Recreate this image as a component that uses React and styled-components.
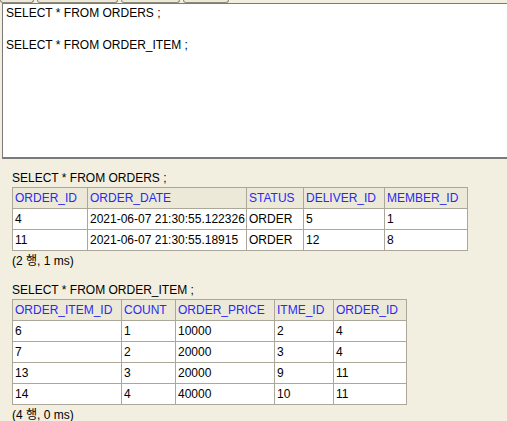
import styled, { createGlobalStyle } from 'styled-components'

const GlobalStyle = createGlobalStyle`
  html, body {
    margin: 0;
    padding: 0;
    background: #f2efe1;
    overflow: hidden;
  }
  body {
    font-family: "Liberation Sans", Arial, "Noto Sans CJK KR", sans-serif;
    font-size: 12px;
    color: #000;
  }
`

const RESULTS = [
  {
    sql: 'SELECT * FROM ORDERS ;',
    columns: [
      { name: 'ORDER_ID', width: 75 },
      { name: 'ORDER_DATE', width: 159 },
      { name: 'STATUS', width: 57 },
      { name: 'DELIVER_ID', width: 81 },
      { name: 'MEMBER_ID', width: 83 },
    ],
    rows: [
      ['4', '2021-06-07 21:30:55.122326', 'ORDER', '5', '1'],
      ['11', '2021-06-07 21:30:55.18915', 'ORDER', '12', '8'],
    ],
    footer: '(2 행, 1 ms)',
  },
  {
    sql: 'SELECT * FROM ORDER_ITEM ;',
    columns: [
      { name: 'ORDER_ITEM_ID', width: 109 },
      { name: 'COUNT', width: 54 },
      { name: 'ORDER_PRICE', width: 99 },
      { name: 'ITME_ID', width: 59 },
      { name: 'ORDER_ID', width: 73 },
    ],
    rows: [
      ['6', '1', '10000', '2', '4'],
      ['7', '2', '20000', '3', '4'],
      ['13', '3', '20000', '9', '11'],
      ['14', '4', '40000', '10', '11'],
    ],
    footer: '(4 행, 0 ms)',
  },
]

const TOOLBAR_BUTTONS = [34, 81, 59, 46]

const Page = styled.div`
  display: flex;
  flex-direction: column;
  width: 507px;
  height: 421px;

  & > * {
    flex: none;
  }
`

const Toolbar = styled.div`
  display: flex;
  align-items: flex-end;
  gap: 3px;
  height: 3px;
  overflow: hidden;
`

const ToolButton = styled.div`
  flex: none;
  width: ${({ $w }) => $w}px;
  height: 20px;
  box-sizing: border-box;
  background: #ece9d8;
  border: 1px solid #8e8b7c;
  border-top: none;
  border-radius: 0 0 3px 3px;
`

const Editor = styled.div`
  margin-left: 2px;
  width: 520px;
  height: 156px;
  box-sizing: border-box;
  background: #fff;
  border: 1px solid #7a7a7a;
  border-bottom-width: 2px;
  padding: 1px 0 0 3px;
`

const SqlLine = styled.div`
  height: 16px;
  line-height: 16px;
  white-space: pre;
`

const Results = styled.div`
  padding: 12px 0 0 12px;
  display: flex;
  flex-direction: column;
  align-items: flex-start;
`

const Block = styled.div`
  display: flex;
  flex-direction: column;
  align-items: flex-start;
  margin-top: ${({ $first }) => ($first ? 0 : 15)}px;
`

const Statement = styled.div`
  line-height: 14px;
  margin-bottom: 2px;
  white-space: pre;
`

const Table = styled.table`
  border-collapse: separate;
  border-spacing: 0;
  table-layout: fixed;
  border-top: 1px solid #aca899;
  border-left: 1px solid #aca899;
`

const Cell = styled.td`
  box-sizing: border-box;
  width: ${({ $w }) => $w}px;
  height: 21px;
  padding: 0 0 0 2px;
  border-right: 1px solid #aca899;
  border-bottom: 1px solid #aca899;
  background: #fff;
  text-align: left;
  vertical-align: middle;
  font-weight: normal;
  white-space: nowrap;
  line-height: 14px;
`

const HeadCell = styled(Cell).attrs({ as: 'th' })`
  background: #ece9d8;
  color: #2a2af2;
`

const Footer = styled.div`
  margin-top: 3px;
  line-height: 14px;
`

export default function App() {
  return (
    <>
      <GlobalStyle />
      <Page>
        <Toolbar>
          {TOOLBAR_BUTTONS.map((w, i) => (
            <ToolButton key={i} $w={w} />
          ))}
        </Toolbar>
        <Editor>
          <SqlLine>SELECT * FROM ORDERS ;</SqlLine>
          <SqlLine> </SqlLine>
          <SqlLine>SELECT * FROM ORDER_ITEM ;</SqlLine>
        </Editor>
        <Results>
          {RESULTS.map((r, i) => (
            <Block key={i} $first={i === 0}>
              <Statement>{r.sql}</Statement>
              <Table style={{ width: r.columns.reduce((s, c) => s + c.width, 1) }}>
                <thead>
                  <tr>
                    {r.columns.map((c) => (
                      <HeadCell key={c.name} $w={c.width}>
                        {c.name}
                      </HeadCell>
                    ))}
                  </tr>
                </thead>
                <tbody>
                  {r.rows.map((row, ri) => (
                    <tr key={ri}>
                      {row.map((v, ci) => (
                        <Cell key={ci} $w={r.columns[ci].width}>
                          {v}
                        </Cell>
                      ))}
                    </tr>
                  ))}
                </tbody>
              </Table>
              <Footer>{r.footer}</Footer>
            </Block>
          ))}
        </Results>
      </Page>
    </>
  )
}
